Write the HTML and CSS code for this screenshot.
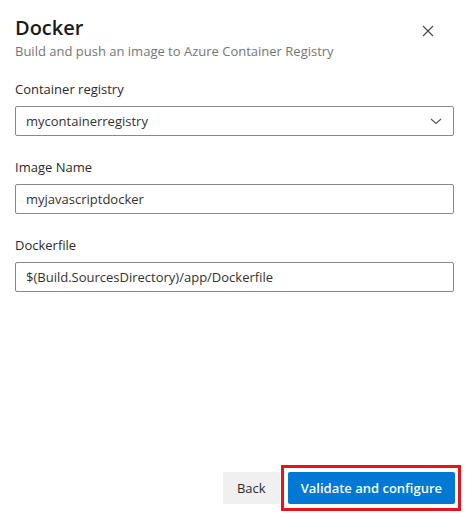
FILE: index.html
```html
<!DOCTYPE html>
<html lang="en">
<head>
<meta charset="utf-8">
<title>Docker</title>
<link rel="stylesheet" href="styles.css">
</head>
<body>
<div class="panel">
  <header class="header">
    <div class="heading">
      <h1 class="title">Docker</h1>
      <p class="subtitle">Build and push an image to Azure Container Registry</p>
    </div>
    <button class="close" aria-label="Close">
      <svg width="12" height="12" viewBox="0 0 12 12"><path d="M1 1 L11 11 M11 1 L1 11" stroke="#444" stroke-width="1.1" fill="none"/></svg>
    </button>
  </header>
  <main class="form">
    <div class="field">
      <label class="label">Container registry</label>
      <div class="input select">
        <span class="value">mycontainerregistry</span>
        <svg class="chevron" width="12" height="7" viewBox="0 0 12 7"><path d="M1 1 L6 5.5 L11 1" stroke="#555" stroke-width="1.1" fill="none"/></svg>
      </div>
    </div>
    <div class="field">
      <label class="label">Image Name</label>
      <div class="input"><span class="value">myjavascriptdocker</span></div>
    </div>
    <div class="field">
      <label class="label">Dockerfile</label>
      <div class="input"><span class="value">$(Build.SourcesDirectory)/app/Dockerfile</span></div>
    </div>
  </main>
  <footer class="footer">
    <button class="btn btn-secondary">Back</button>
    <span class="highlight">
      <button class="btn btn-primary">Validate and configure</button>
    </span>
  </footer>
</div>
</body>
</html>
```
FILE: styles.css
```css
html, body {
  margin: 0;
  padding: 0;
  background: #ffffff;
}
body {
  font-family: "Open Sans", "Noto Sans", sans-serif;
  color: #323130;
}
.panel {
  height: 523px;
  display: flex;
  flex-direction: column;
  padding: 0 11px 0 15px;
  box-sizing: border-box;
}
.header {
  display: flex;
  justify-content: space-between;
  align-items: flex-start;
  padding-top: 14px;
}
.title {
  margin: 0;
  font-size: 20px;
  line-height: 28px;
  font-weight: 600;
  color: #1b1b1b;
}
.subtitle {
  margin: 0;
  font-size: 13px;
  line-height: 18px;
  color: #767676;
}
.close {
  border: none;
  background: transparent;
  padding: 0;
  margin: 11px 20px 0 0;
  width: 12px;
  height: 12px;
  display: flex;
}
.form {
  display: flex;
  flex-direction: column;
  gap: 22px;
  padding-top: 20px;
}
.field {
  display: flex;
  flex-direction: column;
  gap: 8px;
}
.label {
  font-size: 13px;
  line-height: 18px;
  color: #2b2b2b;
}
.input {
  height: 30px;
  box-sizing: border-box;
  border: 1px solid #8a8886;
  border-radius: 2px;
  display: flex;
  align-items: center;
  padding: 0 11px 0 10px;
  font-size: 13px;
  color: #333333;
}
.select {
  justify-content: space-between;
}
.footer {
  margin-top: auto;
  margin-right: -7px;
  display: flex;
  justify-content: flex-end;
  align-items: center;
  gap: 1px;
  padding: 0 0 12px 0;
}
.highlight {
  display: flex;
  border: 3px solid #e3141e;
  padding: 4px 3px 4px 4px;
}
.btn {
  height: 32px;
  border: none;
  border-radius: 2px;
  font-family: "Open Sans", "Noto Sans", sans-serif;
  font-size: 13px;
  padding: 0 14px;
}
.btn-secondary {
  background: #f0f0f0;
  color: #2b2b2b;
}
.btn-primary {
  background: #0078d4;
  color: #ffffff;
  font-weight: 600;
  padding: 0 13px;
}
```
